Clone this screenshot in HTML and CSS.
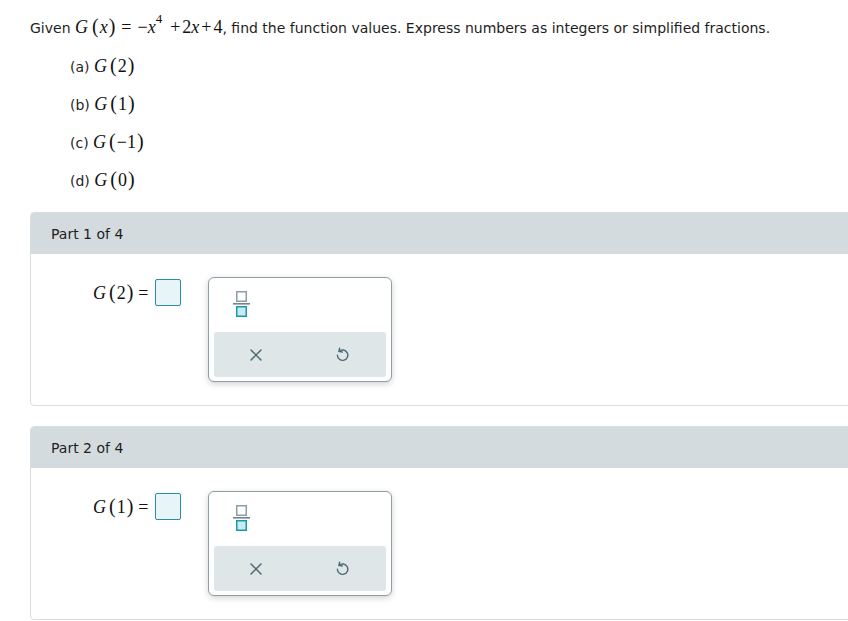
FILE: index.html
```html
<!DOCTYPE html>
<html>
<head>
<meta charset="utf-8">
<link rel="stylesheet" href="styles.css">
</head>
<body>
<div class="page">
  <p class="question">Given <span class="m"><i class="v">G</i><span class="p">(</span><i class="v">x</i><span class="p">)</span><span class="op">=</span>−<i class="v">x</i><span class="sup">4</span><span class="bin">+</span>2<i class="v">x</i><span class="bin">+</span>4</span>, find the function values. Express numbers as integers or simplified fractions.</p>
  <ul class="items">
    <li>(a) <span class="m"><i class="v">G</i><span class="p">(</span>2<span class="p">)</span></span></li>
    <li>(b) <span class="m"><i class="v">G</i><span class="p">(</span>1<span class="p">)</span></span></li>
    <li>(c) <span class="m"><i class="v">G</i><span class="p">(</span>−1<span class="p">)</span></span></li>
    <li>(d) <span class="m"><i class="v">G</i><span class="p">(</span>0<span class="p">)</span></span></li>
  </ul>

  <section class="part">
    <div class="part-head">Part 1 of 4</div>
    <div class="part-body">
      <div class="answer">
        <span class="m"><i class="v">G</i><span class="p">(</span>2<span class="p">)</span><span class="op">=</span></span>
        <span class="box"></span>
      </div>
      <div class="pad">
        <div class="pad-keys">
          <svg class="frac" width="18" height="28" viewBox="0 0 18 28">
            <rect x="3.75" y="1.75" width="9.5" height="9.5" fill="#fff" stroke="#8d9ea4" stroke-width="1.5"/>
            <rect x="0" y="13" width="17" height="1.6" fill="#6f858c"/>
            <rect x="3.75" y="16.75" width="9.5" height="9.5" fill="#c6ecf2" stroke="#1d97ab" stroke-width="1.5"/>
          </svg>
        </div>
        <div class="pad-bar">
          <svg width="14" height="14" viewBox="0 0 14 14"><path d="M2 2 L12 12 M12 2 L2 12" stroke="#4b6a74" stroke-width="1.5" stroke-linecap="round" fill="none"/></svg>
          <svg width="14" height="16" viewBox="0 0 14 16"><path d="M4 4.4 A5.2 5.2 0 1 1 2.4 8.2" stroke="#4b6a74" stroke-width="1.4" fill="none" stroke-linecap="round"/><path d="M4.6 1.2 L4 4.4 L7.2 5" stroke="#4b6a74" stroke-width="1.4" fill="none" stroke-linecap="round" stroke-linejoin="round"/></svg>
        </div>
      </div>
    </div>
  </section>

  <section class="part">
    <div class="part-head">Part 2 of 4</div>
    <div class="part-body">
      <div class="answer">
        <span class="m"><i class="v">G</i><span class="p">(</span>1<span class="p">)</span><span class="op">=</span></span>
        <span class="box"></span>
      </div>
      <div class="pad">
        <div class="pad-keys">
          <svg class="frac" width="18" height="28" viewBox="0 0 18 28">
            <rect x="3.75" y="1.75" width="9.5" height="9.5" fill="#fff" stroke="#8d9ea4" stroke-width="1.5"/>
            <rect x="0" y="13" width="17" height="1.6" fill="#6f858c"/>
            <rect x="3.75" y="16.75" width="9.5" height="9.5" fill="#c6ecf2" stroke="#1d97ab" stroke-width="1.5"/>
          </svg>
        </div>
        <div class="pad-bar">
          <svg width="14" height="14" viewBox="0 0 14 14"><path d="M2 2 L12 12 M12 2 L2 12" stroke="#4b6a74" stroke-width="1.5" stroke-linecap="round" fill="none"/></svg>
          <svg width="14" height="16" viewBox="0 0 14 16"><path d="M4 4.4 A5.2 5.2 0 1 1 2.4 8.2" stroke="#4b6a74" stroke-width="1.4" fill="none" stroke-linecap="round"/><path d="M4.6 1.2 L4 4.4 L7.2 5" stroke="#4b6a74" stroke-width="1.4" fill="none" stroke-linecap="round" stroke-linejoin="round"/></svg>
        </div>
      </div>
    </div>
  </section>
</div>
</body>
</html>
```

FILE: styles.css
```css
html, body {
  margin: 0;
  padding: 0;
  background: #fff;
  overflow: hidden;
}
body {
  font-family: "DejaVu Sans", Verdana, sans-serif;
  font-size: 14px;
  color: #1e1e1e;
}
.page {
  padding: 12px 0 0 30px;
}
.question {
  margin: 0;
  height: 28px;
  line-height: 28px;
  white-space: nowrap;
}
.m {
  font-family: "Liberation Serif", "Times New Roman", serif;
  font-size: 18px;
  color: #111;
}
.m .v {
  font-style: italic;
}
.m .p {
  font-size: 20px;
  margin: 0 1px;
}
.m .op {
  margin: 0 6px 0 5px;
}
.m .bin {
  margin: 0 2px;
}
.m .sup {
  font-size: 13px;
  position: relative;
  top: -10px;
  margin: 0 6px 0 0;
}
.question .m .v:first-child {
  margin-right: 3px;
}
.items {
  list-style: none;
  margin: 6px 0 0;
  padding: 0 0 0 40px;
}
.items li {
  height: 38px;
  line-height: 38px;
}
.items .m .v {
  margin-right: 2px;
}
.part {
  margin: 0 -20px 20px 0;
  border: 1px solid #d7dee0;
  border-radius: 4px;
}
.part:first-of-type {
  margin-top: 14px;
}
.part-head {
  background: #d3dbde;
  height: 41px;
  line-height: 42px;
  padding-left: 20px;
  border-radius: 3px 3px 0 0;
}
.part-body {
  display: flex;
  align-items: flex-start;
  padding: 23px 0 23px 62px;
}
.answer {
  display: flex;
  align-items: center;
  margin-top: 2px;
}
.answer .m .v {
  margin-right: 2px;
}
.answer .m .op {
  margin: 0 6px 0 4px;
}
.box {
  display: inline-block;
  width: 24px;
  height: 25px;
  border: 1.5px solid #2b8d9d;
  border-radius: 2px;
  background: #e7f4f8;
}
.pad {
  margin-left: 27px;
  width: 184px;
  height: 105px;
  box-sizing: border-box;
  border: 1px solid #8d9ea4;
  border-radius: 6px;
  box-shadow: 0 2px 6px rgba(0, 0, 0, 0.18);
  background: #fff;
  padding: 0 5px 4px 5px;
  display: flex;
  flex-direction: column;
}
.pad-keys {
  height: 54px;
  flex: none;
  padding: 12px 0 0 19px;
  box-sizing: border-box;
}
.frac {
  display: block;
}
.pad-bar {
  background: #dfe6e8;
  border-radius: 3px;
  height: 45px;
  flex: none;
  display: flex;
  align-items: center;
  justify-content: flex-start;
  gap: 72px;
  padding-left: 35px;
}
.pad-bar svg {
  display: block;
}
```
